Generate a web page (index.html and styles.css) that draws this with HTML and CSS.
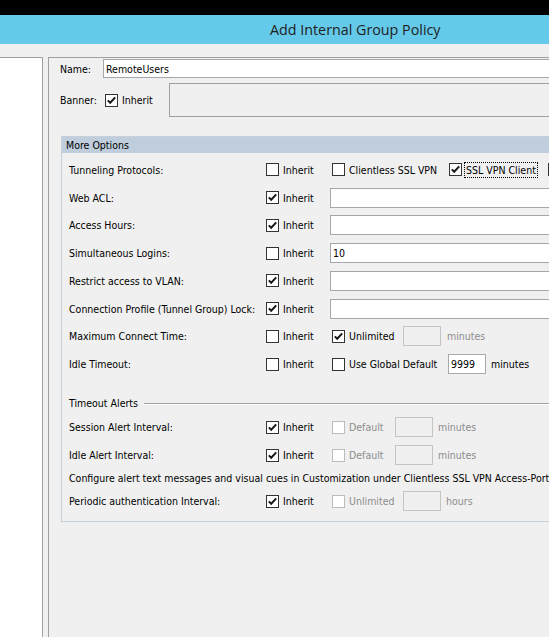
FILE: index.html
```html
<!DOCTYPE html>
<html>
<head>
<meta charset="utf-8">
<title>Add Internal Group Policy</title>
<link rel="stylesheet" href="styles.css">
</head>
<body>
<div class="screen">
  <div class="topbar"></div>
  <div class="titlebar"><span class="title">Add Internal Group Policy</span></div>
  <div class="main">
    <div class="nav"></div>
    <div class="panel">
      <div class="name-row">
        <span class="lbl-name">Name:</span>
        <div class="input name-input">RemoteUsers</div>
      </div>
      <div class="banner-row">
        <span class="lbl-banner">Banner:</span>
        <span class="cb-item banner-inherit"><span class="cb on"><svg viewBox="0 0 11 11"><path d="M1.8 5.4 L4.2 7.8 L9.2 2.4"/></svg></span><span>Inherit</span></span>
        <div class="banner-box"></div>
      </div>

      <div class="group">
        <div class="group-head">More Options</div>
        <div class="group-body">
          <div class="row">
            <span class="row-label">Tunneling Protocols:</span>
            <span class="cb-item inherit"><span class="cb"></span><span>Inherit</span></span>
            <div class="ctrl">
              <span class="cb-item col2 w-clientless"><span class="cb"></span><span>Clientless SSL VPN</span></span>
              <span class="cb-item w-sslclient"><span class="cb on"><svg viewBox="0 0 11 11"><path d="M1.8 5.4 L4.2 7.8 L9.2 2.4"/></svg></span><span class="focus">SSL VPN Client</span></span>
              <span class="cb-item"><span class="cb"></span><span>IPsec IKEv1</span></span>
            </div>
          </div>
          <div class="row">
            <span class="row-label">Web ACL:</span>
            <span class="cb-item inherit"><span class="cb on"><svg viewBox="0 0 11 11"><path d="M1.8 5.4 L4.2 7.8 L9.2 2.4"/></svg></span><span>Inherit</span></span>
            <div class="ctrl"><div class="input wide"></div></div>
          </div>
          <div class="row">
            <span class="row-label">Access Hours:</span>
            <span class="cb-item inherit"><span class="cb on"><svg viewBox="0 0 11 11"><path d="M1.8 5.4 L4.2 7.8 L9.2 2.4"/></svg></span><span>Inherit</span></span>
            <div class="ctrl"><div class="input wide"></div></div>
          </div>
          <div class="row">
            <span class="row-label">Simultaneous Logins:</span>
            <span class="cb-item inherit"><span class="cb"></span><span>Inherit</span></span>
            <div class="ctrl"><div class="input wide">10</div></div>
          </div>
          <div class="row">
            <span class="row-label">Restrict access to VLAN:</span>
            <span class="cb-item inherit"><span class="cb on"><svg viewBox="0 0 11 11"><path d="M1.8 5.4 L4.2 7.8 L9.2 2.4"/></svg></span><span>Inherit</span></span>
            <div class="ctrl"><div class="input wide"></div></div>
          </div>
          <div class="row">
            <span class="row-label">Connection Profile (Tunnel Group) Lock:</span>
            <span class="cb-item inherit"><span class="cb on"><svg viewBox="0 0 11 11"><path d="M1.8 5.4 L4.2 7.8 L9.2 2.4"/></svg></span><span>Inherit</span></span>
            <div class="ctrl"><div class="input wide"></div></div>
          </div>
          <div class="row">
            <span class="row-label">Maximum Connect Time:</span>
            <span class="cb-item inherit"><span class="cb"></span><span>Inherit</span></span>
            <div class="ctrl">
              <span class="cb-item col2 w-71"><span class="cb on"><svg viewBox="0 0 11 11"><path d="M1.8 5.4 L4.2 7.8 L9.2 2.4"/></svg></span><span>Unlimited</span></span>
              <div class="input small disabled"></div>
              <span class="unit dim unit-6">minutes</span>
            </div>
          </div>
          <div class="row">
            <span class="row-label">Idle Timeout:</span>
            <span class="cb-item inherit"><span class="cb"></span><span>Inherit</span></span>
            <div class="ctrl">
              <span class="cb-item col2 w-116"><span class="cb"></span><span>Use Global Default</span></span>
              <div class="input small">9999</div>
              <span class="unit">minutes</span>
            </div>
          </div>

          <div class="legend"><span>Timeout Alerts</span><span class="legend-line"></span></div>

          <div class="row row28 first-alert">
            <span class="row-label">Session Alert Interval:</span>
            <span class="cb-item inherit"><span class="cb on"><svg viewBox="0 0 11 11"><path d="M1.8 5.4 L4.2 7.8 L9.2 2.4"/></svg></span><span>Inherit</span></span>
            <div class="ctrl">
              <span class="cb-item col2 w-63 dim"><span class="cb off"></span><span>Default</span></span>
              <div class="input small disabled"></div>
              <span class="unit dim">minutes</span>
            </div>
          </div>
          <div class="row row28">
            <span class="row-label">Idle Alert Interval:</span>
            <span class="cb-item inherit"><span class="cb on"><svg viewBox="0 0 11 11"><path d="M1.8 5.4 L4.2 7.8 L9.2 2.4"/></svg></span><span>Inherit</span></span>
            <div class="ctrl">
              <span class="cb-item col2 w-63 dim"><span class="cb off"></span><span>Default</span></span>
              <div class="input small disabled"></div>
              <span class="unit dim">minutes</span>
            </div>
          </div>
          <div class="note">Configure alert text messages and visual cues in Customization under Clientless SSL VPN Access-Portal.</div>
          <div class="row row28">
            <span class="row-label">Periodic authentication Interval:</span>
            <span class="cb-item inherit"><span class="cb on"><svg viewBox="0 0 11 11"><path d="M1.8 5.4 L4.2 7.8 L9.2 2.4"/></svg></span><span>Inherit</span></span>
            <div class="ctrl">
              <span class="cb-item col2 w-71 dim"><span class="cb off"></span><span>Unlimited</span></span>
              <div class="input small disabled"></div>
              <span class="unit dim">hours</span>
            </div>
          </div>
        </div>
      </div>
    </div>
  </div>
</div>
</body>
</html>
```
FILE: styles.css
```css
html, body {
  margin: 0;
  padding: 0;
  background: #f0f0f0;
}

.screen {
  width: 549px;
  height: 637px;
  overflow: hidden;
  display: flex;
  flex-direction: column;
  background: #f0f0f0;
  font-family: "DejaVu Sans Condensed", "DejaVu Sans", sans-serif;
  font-stretch: condensed;
  font-size: 10.5px;
  color: #000;
  white-space: nowrap;
}

.topbar {
  height: 15px;
  flex: none;
  background: #000;
}

.titlebar {
  height: 29px;
  flex: none;
  background: #65c9ea;
  display: flex;
  align-items: center;
  padding-left: 270px;
}

.title {
  font-family: "Open Sans", "Noto Sans", sans-serif;
  font-stretch: normal;
  font-size: 14.3px;
  color: #1e1e1e;
}

.main {
  flex: 1;
  display: flex;
  gap: 5px;
  padding-top: 13px;
}

.nav {
  flex: none;
  width: 42px;
  background: #fff;
  border-top: 1px solid #a0a0a0;
  border-right: 1px solid #a0a0a0;
}

.panel {
  flex: none;
  width: 800px;
  border-top: 1px solid #a0a0a0;
  border-left: 1px solid #a0a0a0;
  padding: 1px 0 0 11px;
}

.input {
  box-sizing: border-box;
  height: 20px;
  border: 1px solid #a5a7ad;
  background: #fff;
  display: flex;
  align-items: center;
  padding-left: 2px;
  flex: none;
}

.input.wide {
  flex: 1;
}

.input.small {
  width: 38px;
}

.input.disabled {
  border-color: #c4c4c4;
  background: #f0f0f0;
}

.name-row {
  display: flex;
  align-items: center;
  height: 19px;
}

.lbl-name {
  width: 43px;
  flex: none;
}

.name-input {
  flex: 1;
  height: 19px;
}

.banner-row {
  display: flex;
  align-items: center;
  height: 34px;
  margin-top: 5px;
}

.lbl-banner {
  width: 45px;
  flex: none;
}

.banner-inherit {
  width: 64px;
  gap: 3px;
}

.banner-box {
  flex: 1;
  height: 34px;
  box-sizing: border-box;
  border: 1px solid #a0a0a0;
  background: #f0f0f0;
}

.cb-item {
  display: flex;
  align-items: center;
  gap: 4px;
  flex: none;
}

.cb {
  box-sizing: border-box;
  width: 13px;
  height: 13px;
  border: 1px solid #333;
  background: #fff;
  flex: none;
  display: block;
}

.cb svg {
  display: block;
  width: 11px;
  height: 11px;
}

.cb svg path {
  fill: none;
  stroke: #1a1a1a;
  stroke-width: 2;
}

.cb.off {
  border-color: #bcbcbc;
}

.dim {
  color: #8d8d8d;
}

.group {
  margin: 19px 0 0 1px;
  border: 1px solid #c6d0db;
}

.group-head {
  height: 16px;
  background: #bfcddc;
  display: flex;
  align-items: center;
  padding-left: 4px;
}

.group-body {
  padding: 3px 0 6px 7px;
}

.row {
  display: flex;
  align-items: center;
  height: 27.75px;
}

.row28 {
  height: 28px;
}

.first-alert {
  margin-top: 2px;
}

.row-label {
  width: 197px;
  flex: none;
}

.inherit {
  width: 64px;
}

.ctrl {
  flex: 1;
  display: flex;
  align-items: center;
}

.col2 {
  margin-left: 2px;
}

.w-clientless {
  width: 117px;
}

.w-sslclient {
  width: 99px;
  gap: 2px;
}

.w-71 {
  width: 71px;
}

.w-116 {
  width: 116px;
}

.w-63 {
  width: 63px;
}

.focus {
  border: 1px dotted #000;
  padding: 1px 1px 1px 1px;
}

.unit {
  margin-left: 5px;
}

.unit-6 {
  margin-left: 6px;
}

.legend {
  display: flex;
  align-items: center;
  height: 16px;
  margin-top: 17px;
}

.legend-line {
  flex: 1;
  height: 0;
  border-top: 1px solid #a0a0a0;
  border-bottom: 1px solid #fff;
  margin: 2px 0 0 6px;
}

.note {
  height: 18px;
  display: flex;
  align-items: center;
}
```
